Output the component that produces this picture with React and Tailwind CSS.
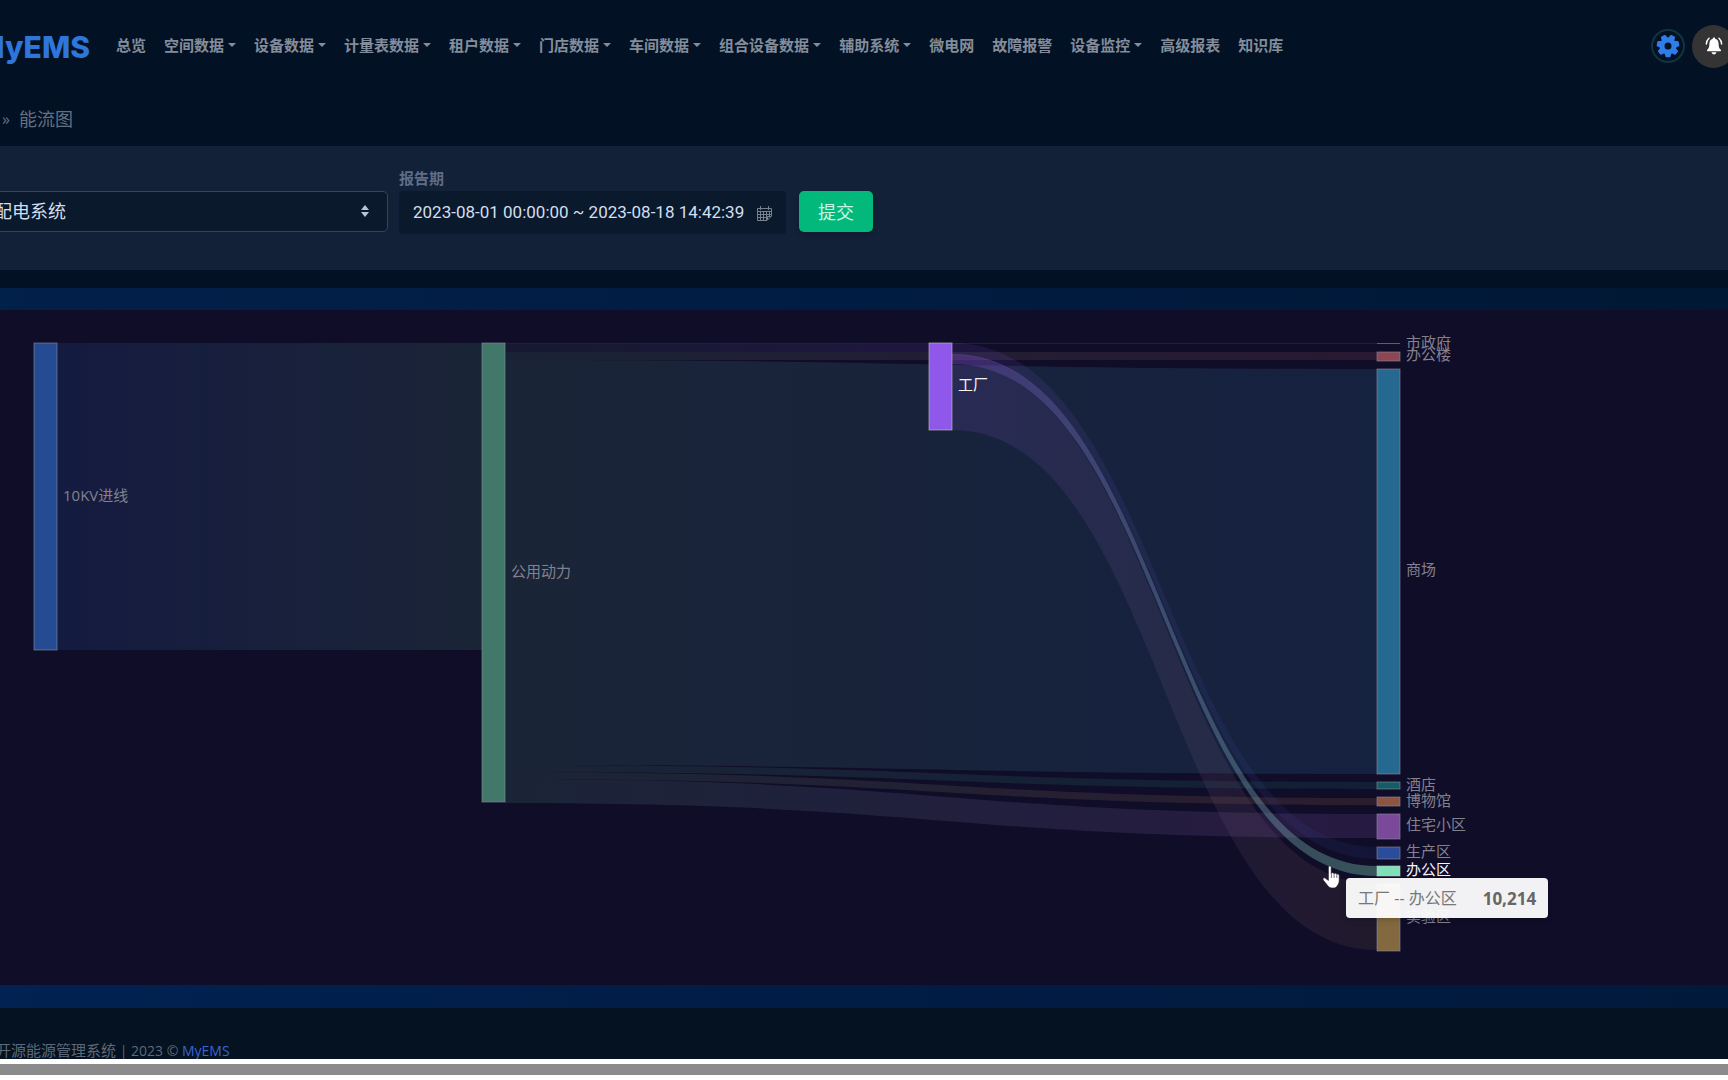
import React from "react";

const NAV = [
  ["总览", false],
  ["空间数据", true],
  ["设备数据", true],
  ["计量表数据", true],
  ["租户数据", true],
  ["门店数据", true],
  ["车间数据", true],
  ["组合设备数据", true],
  ["辅助系统", true],
  ["微电网", false],
  ["故障报警", false],
  ["设备监控", true],
  ["高级报表", false],
  ["知识库", false],
];

// Node: name, column x, top, height, fill, label centre y
const NODES = [
  { id: "in", name: "10KV进线", x: 34, y: 33, h: 307, c: "#254c93", ly: 186 },
  { id: "pub", name: "公用动力", x: 482, y: 33, h: 459, c: "#41786a", ly: 262 },
  { id: "fac", name: "工厂", x: 929, y: 33, h: 87, c: "#9058ea", ly: 75, on: true },
  { id: "gov", name: "市政府", x: 1377, y: 33, h: 1, c: "#5c5c74", ly: 33 },
  { id: "office", name: "办公楼", x: 1377, y: 42, h: 9, c: "#8d4654", ly: 45 },
  { id: "mall", name: "商场", x: 1377, y: 59, h: 405, c: "#266990", ly: 260 },
  { id: "hotel", name: "酒店", x: 1377, y: 472, h: 7, c: "#165c66", ly: 475 },
  { id: "museum", name: "博物馆", x: 1377, y: 487, h: 9, c: "#8d5540", ly: 491 },
  { id: "home", name: "住宅小区", x: 1377, y: 504, h: 25, c: "#7b499a", ly: 515 },
  { id: "prod", name: "生产区", x: 1377, y: 537, h: 12, c: "#2a4c9b", ly: 542 },
  { id: "work", name: "办公区", x: 1377, y: 556, h: 10, c: "#7fe0b8", ly: 560, on: true },
  { id: "lab", name: "实验区", x: 1377, y: 574, h: 67, c: "#82693f", ly: 607 },
];

// Link: source, target, top at source, top at target, thickness, opacity
const LINKS = [
  ["in", "pub", 33, 33, 307, 0.22],
  ["pub", "fac", 34, 34, 8, 0.12],
  ["pub", "gov", 33, 33, 1, 0.22],
  ["pub", "office", 42, 42, 8, 0.2],
  ["pub", "mall", 50, 59, 405, 0.22],
  ["pub", "hotel", 455, 472, 7, 0.22],
  ["pub", "museum", 462, 488, 7, 0.22],
  ["pub", "home", 469, 504, 24, 0.22],
  ["fac", "prod", 33, 537, 12, 0.12],
  ["fac", "lab", 54, 574, 66, 0.14],
  ["fac", "work", 44, 556, 10, 0.34],
];

const byId = Object.fromEntries(NODES.map((n) => [n.id, n]));

function linkPath(a, b, ys, yt, w) {
  const x0 = a.x + 23;
  const x1 = b.x;
  const m = (x0 + x1) / 2;
  return `M${x0} ${ys}C${m} ${ys} ${m} ${yt} ${x1} ${yt}V${yt + w}C${m} ${yt + w} ${m} ${ys + w} ${x0} ${ys + w}Z`;
}

function Sankey() {
  return (
    <svg viewBox="0 0 1728 675" className="block h-auto w-full" role="img" aria-label="能流图">
      <defs>
        {LINKS.map(([s, t]) => (
          <linearGradient key={s + t} id={`g-${s}-${t}`} gradientUnits="userSpaceOnUse" x1={byId[s].x + 23} x2={byId[t].x} y1="0" y2="0">
            <stop offset="0" stopColor={byId[s].c} />
            <stop offset="1" stopColor={byId[t].c} />
          </linearGradient>
        ))}
      </defs>
      {LINKS.map(([s, t, ys, yt, w, o]) => (
        <path key={s + t} d={linkPath(byId[s], byId[t], ys, yt, w)} fill={`url(#g-${s}-${t})`} opacity={o} />
      ))}
      {NODES.map((n) => (
        <g key={n.id}>
          <rect
            x={n.x}
            y={n.y}
            width="23"
            height={n.h}
            fill={n.c}
            stroke={n.h === 1 ? "none" : n.on ? "#c4c2d4" : "#8a8c9c"}
            strokeOpacity="0.6"
          />
          <text
            x={n.x + 29}
            y={n.ly + 5}
            fill={n.on ? "#f4f4f8" : "#83818d"}
            className="font-['Open_Sans','Noto_Sans_CJK_SC',sans-serif] text-[15px]"
          >
            {n.name}
          </text>
        </g>
      ))}
      <g transform="translate(1322 556)" fill="#fff" stroke="#16142a" strokeWidth="0.6">
        <path d="M6.4 1.6C6.4 0.6 7 0 7.8 0S9.2 0.6 9.2 1.6V7.4C9.4 6.4 11.8 6.4 12 7.8C12.4 6.9 14.6 7 14.8 8.4C15.4 7.7 17.2 8.1 17.2 9.6V14.4C17.2 17 16.2 18.2 15.6 19.2C14.8 21.4 12.8 22 11 22C8.4 22 7 21.4 6 20L1.2 14C0.2 12.6 1.8 11.2 3.4 12.2L6.4 14.4Z" />
        <path d="M9.4 7.6V12M12.1 8V12M14.8 8.6V12" fill="none" />
      </g>
    </svg>
  );
}

function GearIcon() {
  return (
    <svg viewBox="-12 -12 24 24" className="size-6" aria-hidden="true">
      <g fill="#2f7de9">
        {[26, 77, 129, 180, 231, 283, 334].map((a) => (
          <path key={a} transform={`rotate(${a})`} d="M-3.4 -7L-2.6 -10.6Q-2.4 -11.3 -1.7 -11.3H1.7Q2.4 -11.3 2.6 -10.6L3.4 -7Z" />
        ))}
      </g>
      <circle r="6" fill="none" stroke="#2f7de9" strokeWidth="5" />
    </svg>
  );
}

function BellIcon() {
  return (
    <svg viewBox="0 0 18 18" className="size-[18px]" aria-hidden="true">
      <path
        d="M9 0.5C9.8 0.5 10.2 1 10.2 1.8C12.6 2.4 13.6 4.4 13.6 6.8C13.6 10 14.2 11.4 15.8 12.8C16.2 13.3 16 14.2 15.2 14.2H2.8C2 14.2 1.8 13.3 2.2 12.8C3.8 11.4 4.4 10 4.4 6.8C4.4 4.4 5.4 2.4 7.8 1.8C7.8 1 8.2 0.5 9 0.5ZM6.6 15.2H11.4C11.2 16.6 10.2 17.4 9 17.4S6.8 16.6 6.6 15.2Z"
        fill="#fff"
      />
      <path d="M4 1.2C2.4 2.6 1.5 4.6 1.4 7M14 1.2C15.6 2.6 16.5 4.6 16.6 7" fill="none" stroke="#fff" strokeWidth="1.5" strokeLinecap="round" />
    </svg>
  );
}

export default function App() {
  return (
    <div className="flex min-h-screen w-full flex-col overflow-hidden bg-[#021124] font-['Open_Sans','Noto_Sans_CJK_SC',sans-serif]">
      <header className="flex h-[92px] items-center">
        <a href="#" className="flex w-[90px] shrink-0 justify-end overflow-hidden pt-px font-[Inter,sans-serif] text-[30px] leading-10 font-extrabold text-[#2f76dc]">
          MyEMS
        </a>
        <nav className="ml-[26px] flex items-center gap-[18px] pb-[2px] text-[15px] leading-6 font-semibold whitespace-nowrap text-[#838d9b]">
          {NAV.map(([name, menu]) =>
            menu ? (
              <button key={name} type="button" className="flex items-center gap-1">
                {name}
                <svg viewBox="0 0 8 4" className="h-1 w-2" fill="currentColor" aria-hidden="true">
                  <path d="M0 0H8L4 4Z" />
                </svg>
              </button>
            ) : (
              <a key={name} href="#">
                {name}
              </a>
            )
          )}
        </nav>
        <div className="-mr-[7px] ml-auto flex shrink-0 items-center gap-[7px]">
          <button type="button" aria-label="设置" className="flex size-[34px] items-center justify-center rounded-full border-2 border-[#12343f]">
            <GearIcon />
          </button>
          <button type="button" aria-label="通知" className="flex size-[43px] items-center justify-center rounded-full bg-[#353435]">
            <BellIcon />
          </button>
        </div>
      </header>

      <div className="flex h-[54px] items-center gap-[9px] pl-[2px] text-lg text-[#647082]">
        <span className="text-base">»</span>
        <span>能流图</span>
      </div>

      <form className="-ml-[22px] flex h-[124px] items-start bg-[#122038] pt-[21px]" onSubmit={(e) => e.preventDefault()}>
        <div className="relative mt-6 w-[410px] shrink-0">
          <select
            aria-label="能流图"
            className="h-[41px] w-full appearance-none rounded-[5px] border border-[#344459] bg-[#0a1a2c] pb-[2px] pl-[15px] text-lg text-[#d3dff0]"
          >
            <option>配电系统</option>
          </select>
          <svg viewBox="0 0 8 12" className="pointer-events-none absolute top-[14px] right-[19px] h-3 w-2" fill="#b9c5d6" aria-hidden="true">
            <path d="M4 0L8 5H0ZM4 12L0 7H8Z" />
          </svg>
        </div>
        <div className="ml-[11px] w-[387px] shrink-0">
          <label htmlFor="period" className="block h-6 text-[15px] leading-[22px] font-semibold text-[#5f6d87]">
            报告期
          </label>
          <div className="flex h-[43px] items-center rounded-[4px] bg-[#0a192c] px-[14px]">
            <input
              id="period"
              type="text"
              readOnly
              defaultValue="2023-08-01 00:00:00 ~ 2023-08-18 14:42:39"
              className="min-w-0 flex-1 bg-transparent font-[Roboto,sans-serif] text-[17px] text-[#d3dff0] outline-none"
            />
            <svg viewBox="0 0 15 15" className="mt-[2px] ml-1 h-[15px] w-[15px] shrink-0" fill="none" stroke="#77808d" aria-hidden="true">
              <path d="M0.5 2.5H14.5V10L10 14.5H0.5ZM0.5 5.5H14.5M3.5 0V4M11.5 0V4M3.5 5.5V14M6.5 5.5V14M9.5 5.5V14M12.5 5.5V11M0.5 8.5H14.5M0.5 11.5H10M10.5 14V10.5H14" />
            </svg>
          </div>
        </div>
        <button type="submit" className="mt-6 ml-[13px] h-[41px] w-[74px] rounded-[5px] bg-[#02b97b] text-lg text-[#cbf7e6] shadow-md">
          提交
        </button>
      </form>

      <main className="mt-[18px]">
        <div className="h-[22px] bg-linear-to-r from-[#01204a] via-[#011c42] to-[#011834]" />
        <div className="relative bg-[#100d29]">
          <Sankey />
          <div className="absolute top-[84.2%] left-[77.9%] flex h-10 w-[202px] items-center justify-between rounded-[4px] bg-white/95 px-3 text-base whitespace-nowrap text-[#777777] shadow-md">
            <span>工厂 -- 办公区</span>
            <b className="text-[17px] font-bold text-[#666666]">10,214</b>
          </div>
        </div>
        <div className="h-[23px] bg-linear-to-r from-[#012252] via-[#011c45] to-[#011a3c]" />
      </main>

      <footer className="flex h-[51px] items-end overflow-hidden bg-[#041221] text-[15px] leading-[17px] whitespace-nowrap text-[#5d6978]">
        <p className="-ml-1">
          开源能源管理系统
          <span className="text-sm leading-[17px]">
            {" "}
            | 2023 ©{" "}
            <a href="#" className="text-[#3d63cc]">
              MyEMS
            </a>
          </span>
        </p>
      </footer>
      <div className="h-[21px] border-y-[5px] border-white bg-[#8b8b8b]" />
    </div>
  );
}
